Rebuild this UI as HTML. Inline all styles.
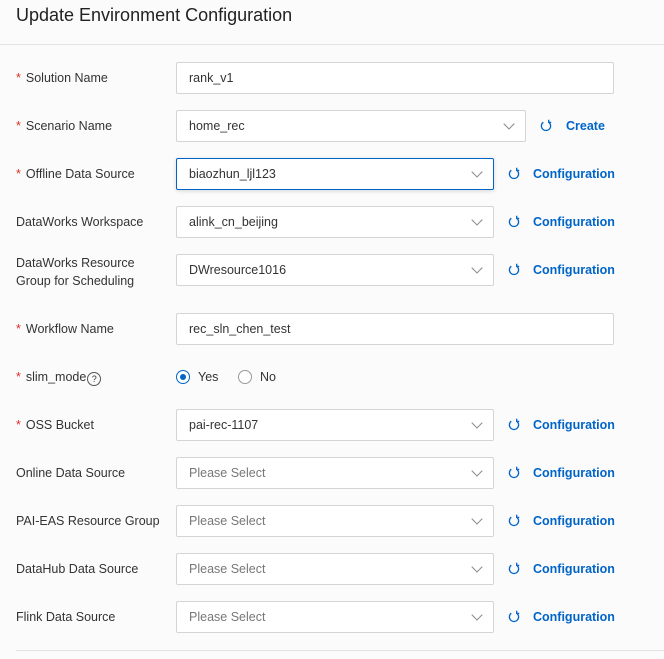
<!DOCTYPE html>
<html><head><style>
body{margin:0;width:664px;height:659px;background:#fbfbfb;font-family:"Liberation Sans",sans-serif;color:#333;position:relative;overflow:hidden}
.t{position:absolute;left:16px;top:5px;font-size:18px;color:#222}
.hl{position:absolute;left:0;right:0;top:44px;border-top:1px solid #e3e3e3}
.bl{position:absolute;left:16px;right:0;top:650px;border-top:1px solid #e3e3e3}
.lab{position:absolute;left:16px;font-size:12.5px;color:#333;line-height:18px;margin-top:1px}
.lab b{color:#d93026;font-weight:normal;margin-right:5px}
.in{position:absolute;left:176px;height:30px;border:1px solid #d4d4d4;border-radius:2px;background:#fff;font-size:12.5px;line-height:31px;padding-left:12px;box-sizing:content-box;color:#333}
.in.ph{color:#777}
.in.f{border-color:#0064c8;box-shadow:0 1px 4px rgba(0,0,0,.15)}
.ar{position:absolute;right:12px;top:9px;width:7px;height:7px;border-right:1.3px solid #888;border-bottom:1.3px solid #888;transform:rotate(45deg)}
.ic{position:absolute}
.lk{position:absolute;font-size:12.5px;font-weight:bold;color:#0064c8;margin-top:1px}
.rd{position:absolute;width:12px;height:12px;border-radius:50%;border:1px solid #999;background:#fff}
</style></head><body>
<div class="t">Update Environment Configuration</div>
<div class="hl"></div>
<svg width="0" height="0" style="position:absolute"><defs><g id="r"><path d="M4.3 3.2A4.6 4.6 0 1 0 9.7 3.2" fill="none" stroke="#0064c8" stroke-width="1.3"/><path d="M9.7 0.8L9.7 3.4L12.2 3.4" fill="none" stroke="#0064c8" stroke-width="1.3"/></g></defs></svg>

<div class="lab" style="top:68px"><b>*</b>Solution Name</div>
<div class="in" style="top:62px;width:424px">rank_v1</div>

<div class="lab" style="top:116px"><b>*</b>Scenario Name</div>
<div class="in" style="top:110px;width:336px">home_rec<i class="ar"></i></div>

<div class="lab" style="top:164px"><b>*</b>Offline Data Source</div>
<div class="in f" style="top:158px;width:304px">biaozhun_ljl123<i class="ar"></i></div>

<div class="lab" style="top:212px">DataWorks Workspace</div>
<div class="in" style="top:206px;width:304px">alink_cn_beijing<i class="ar"></i></div>

<div class="lab" style="top:253px">DataWorks Resource<br>Group for Scheduling</div>
<div class="in" style="top:254px;width:304px">DWresource1016<i class="ar"></i></div>

<div class="lab" style="top:319px"><b>*</b>Workflow Name</div>
<div class="in" style="top:313px;width:424px">rec_sln_chen_test</div>

<div class="lab" style="top:367px"><b>*</b>slim_mode<span style="display:inline-block;width:12px;height:12px;border:1px solid #555;border-radius:50%;font-size:9px;line-height:12px;text-align:center;margin-left:1px;vertical-align:-1px;box-sizing:content-box">?</span></div>
<div class="rd" style="left:176px;top:370px;border-color:#0064c8"><div style="position:absolute;left:3px;top:3px;width:6px;height:6px;border-radius:50%;background:#0064c8"></div></div>
<div class="lab" style="left:198px;top:367px">Yes</div>
<div class="rd" style="left:238px;top:370px"></div>
<div class="lab" style="left:260px;top:367px">No</div>

<div class="lab" style="top:415px"><b>*</b>OSS Bucket</div>
<div class="in" style="top:409px;width:304px">pai-rec-1107<i class="ar"></i></div>

<div class="lab" style="top:463px">Online Data Source</div>
<div class="in ph" style="top:457px;width:304px">Please Select<i class="ar"></i></div>

<div class="lab" style="top:511px">PAI-EAS Resource Group</div>
<div class="in ph" style="top:505px;width:304px">Please Select<i class="ar"></i></div>

<div class="lab" style="top:559px">DataHub Data Source</div>
<div class="in ph" style="top:553px;width:304px">Please Select<i class="ar"></i></div>

<div class="lab" style="top:607px">Flink Data Source</div>
<div class="in ph" style="top:601px;width:304px">Please Select<i class="ar"></i></div>

<svg class="ic" style="left:539px;top:119px" width="14" height="14"><use href="#r"/></svg>
<div class="lk" style="left:566px;top:118px">Create</div>

<svg class="ic" style="left:507px;top:167px" width="14" height="14"><use href="#r"/></svg><div class="lk" style="left:533px;top:166px">Configuration</div>
<svg class="ic" style="left:507px;top:215px" width="14" height="14"><use href="#r"/></svg><div class="lk" style="left:533px;top:214px">Configuration</div>
<svg class="ic" style="left:507px;top:263px" width="14" height="14"><use href="#r"/></svg><div class="lk" style="left:533px;top:262px">Configuration</div>
<svg class="ic" style="left:507px;top:418px" width="14" height="14"><use href="#r"/></svg><div class="lk" style="left:533px;top:417px">Configuration</div>
<svg class="ic" style="left:507px;top:466px" width="14" height="14"><use href="#r"/></svg><div class="lk" style="left:533px;top:465px">Configuration</div>
<svg class="ic" style="left:507px;top:514px" width="14" height="14"><use href="#r"/></svg><div class="lk" style="left:533px;top:513px">Configuration</div>
<svg class="ic" style="left:507px;top:562px" width="14" height="14"><use href="#r"/></svg><div class="lk" style="left:533px;top:561px">Configuration</div>
<svg class="ic" style="left:507px;top:610px" width="14" height="14"><use href="#r"/></svg><div class="lk" style="left:533px;top:609px">Configuration</div>

<div class="bl"></div>
</body></html>
